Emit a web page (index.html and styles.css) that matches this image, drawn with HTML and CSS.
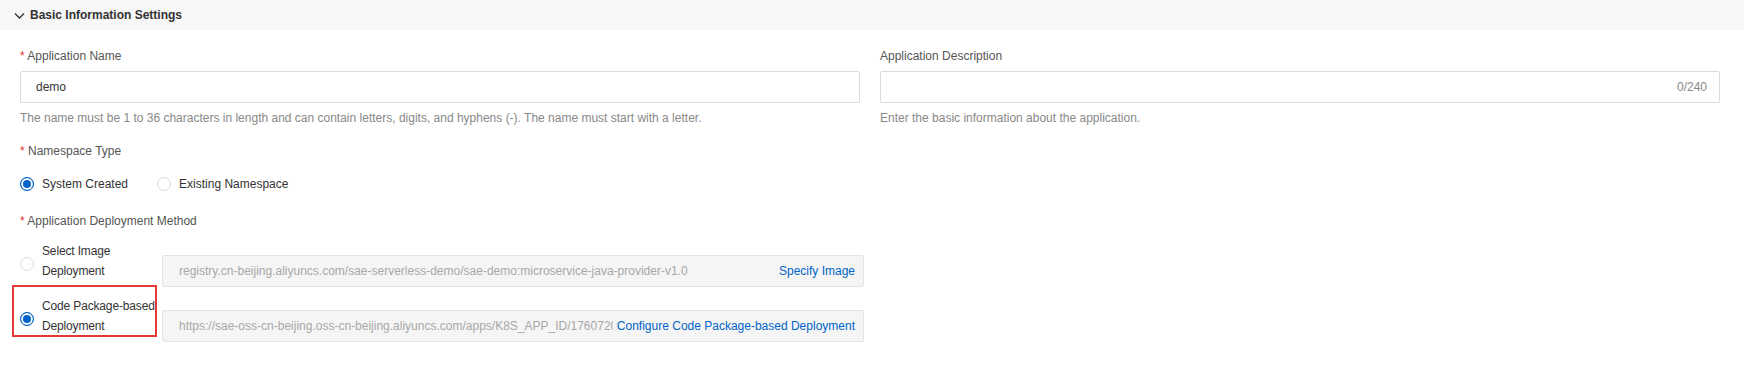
FILE: index.html
```html
<!DOCTYPE html>
<html lang="en">
<head>
    <meta charset="UTF-8">
    <title>Basic Information Settings</title>
    <link rel="stylesheet" href="styles.css">
</head>
<body>
    <div class="section-header">
        <svg class="chevron" width="11" height="11" viewBox="0 0 11 11">
            <path d="M1 3.5 L5.5 8 L10 3.5" fill="none" stroke="#333" stroke-width="1.3"/>
        </svg>
        <span>Basic Information Settings</span>
    </div>

    <div class="form-body">
        <div class="form-grid">
            <div class="field">
                <div class="label"><span class="required">*</span> Application Name</div>
                <div class="input"><span class="value">demo</span></div>
                <div class="help">The name must be 1 to 36 characters in length and can contain letters, digits, and hyphens (-). The name must start with a letter.</div>
            </div>
            <div class="field">
                <div class="label">Application Description</div>
                <div class="input input-count"><span class="count">0/240</span></div>
                <div class="help">Enter the basic information about the application.</div>
            </div>
        </div>

        <div class="field field-wide">
            <div class="label"><span class="required">*</span> Namespace Type</div>
            <div class="radio-group">
                <label class="radio checked"><span class="dot"></span>System Created</label>
                <label class="radio"><span class="dot"></span>Existing Namespace</label>
            </div>
        </div>

        <div class="field field-wide">
            <div class="label label-deploy"><span class="required">*</span> Application Deployment Method</div>
            <div class="deploy-row">
                <label class="radio deploy-option"><span class="dot"></span><span class="option-text">Select Image<br>Deployment</span></label>
                <div class="input disabled">
                    <span class="disabled-value">registry.cn-beijing.aliyuncs.com/sae-serverless-demo/sae-demo:microservice-java-provider-v1.0</span>
                    <a class="link">Specify Image</a>
                </div>
            </div>
            <div class="deploy-row">
                <label class="radio checked deploy-option highlight"><span class="dot"></span><span class="option-text">Code Package-based<br>Deployment</span></label>
                <div class="input disabled">
                    <span class="disabled-value">https://sae-oss-cn-beijing.oss-cn-beijing.aliyuncs.com/apps/K8S_APP_ID/1760720a-3c1f-4d2b-9f0e/demo-1.0.jar</span>
                    <a class="link">Configure Code Package-based Deployment</a>
                </div>
            </div>
        </div>
    </div>
</body>
</html>
```

FILE: styles.css
```css
body {
    margin: 0;
    font-family: "Liberation Sans", Arial, sans-serif;
    font-size: 12px;
    color: #333;
    background-color: #ffffff;
}

.section-header {
    height: 30px;
    display: flex;
    align-items: center;
    gap: 5px;
    padding-left: 14px;
    background-color: #f7f7f7;
    font-weight: bold;
    color: #333;
}

.form-body {
    padding: 16px 24px 0 20px;
}

.form-grid {
    display: grid;
    grid-template-columns: 1fr 1fr;
    gap: 20px;
}

.label {
    line-height: 20px;
    color: #555;
    margin-bottom: 5px;
}

.required {
    color: #d93026;
}

.input {
    height: 32px;
    box-sizing: border-box;
    border: 1px solid #dcdcdc;
    border-radius: 2px;
    display: flex;
    align-items: center;
    padding: 0 15px;
    overflow: hidden;
}

.input-count {
    justify-content: flex-end;
    padding-right: 12px;
}

.count {
    color: #888;
}

.help {
    line-height: 18px;
    margin-top: 6px;
    color: #888;
}

.field-wide {
    margin-top: 14px;
    width: 844px;
}

.radio-group {
    display: flex;
    gap: 29px;
    margin-top: 13px;
    line-height: 20px;
}

.radio {
    display: flex;
    align-items: center;
    gap: 8px;
    color: #333;
}

.dot {
    width: 14px;
    height: 14px;
    box-sizing: border-box;
    border: 1px solid #dedede;
    border-radius: 50%;
    flex-shrink: 0;
    background-color: #fff;
}

.radio.checked .dot {
    border-color: #0064c8;
    background-color: #0064c8;
    box-shadow: inset 0 0 0 2px #fff;
}

.label-deploy {
    margin-top: 17px;
    margin-bottom: 10px;
}

.deploy-row {
    display: flex;
    align-items: flex-start;
    margin-bottom: 9px;
}

.deploy-option {
    width: 142px;
    flex-shrink: 0;
    line-height: 20px;
}

.deploy-option .dot {
    margin-top: 6px;
}

.option-text {
    white-space: nowrap;
    letter-spacing: -0.15px;
}

/* red annotation frame round the chosen option */
.highlight {
    position: relative;
}

.highlight::after {
    content: "";
    position: absolute;
    top: -11px;
    left: -8px;
    width: 145px;
    height: 52px;
    box-sizing: border-box;
    border: 2px solid #e53935;
}

.input.disabled {
    flex: 1;
    margin-top: 14px;
    padding: 0 8px 0 16px;
    background-color: #f5f5f5;
    border-color: #e3e3e3;
    justify-content: space-between;
    gap: 4px;
}

.disabled-value {
    color: #a8a8a8;
    white-space: nowrap;
    overflow: hidden;
    flex: 1;
}

.link {
    color: #0064c8;
    white-space: nowrap;
    cursor: pointer;
}
```
